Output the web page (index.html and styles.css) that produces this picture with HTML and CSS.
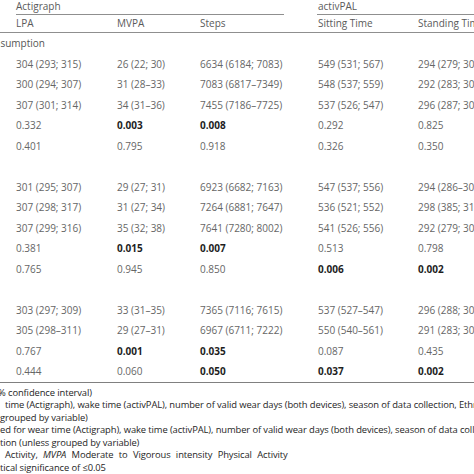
FILE: index.html
```html
<!DOCTYPE html>
<html lang="en">
<head>
<meta charset="utf-8">
<title>Table</title>
<link rel="stylesheet" href="styles.css">
</head>
<body>
<div class="sheet">
  <div class="row hdr1">
    <div class="grp grp-a">Actigraph</div>
    <div class="grp grp-b">activPAL</div>
  </div>
  <div class="row hdr2">
    <div class="c lbl"></div>
    <div class="c">LPA</div>
    <div class="c">MVPA</div>
    <div class="c">Steps</div>
    <div class="c">Sitting Time</div>
    <div class="c">Standing Time</div>
  </div>
  <div class="body">
    <div class="row"><div class="c section">Consumption</div></div>
    <div class="row"><div class="c lbl"></div><div class="c">304 (293; 315)</div><div class="c">26 (22; 30)</div><div class="c">6634 (6184; 7083)</div><div class="c">549 (531; 567)</div><div class="c">294 (279; 309)</div></div>
    <div class="row"><div class="c lbl"></div><div class="c">300 (294; 307)</div><div class="c">31 (28–33)</div><div class="c">7083 (6817–7349)</div><div class="c">548 (537; 559)</div><div class="c">292 (283; 301)</div></div>
    <div class="row"><div class="c lbl"></div><div class="c">307 (301; 314)</div><div class="c">34 (31–36)</div><div class="c">7455 (7186–7725)</div><div class="c">537 (526; 547)</div><div class="c">296 (287; 305)</div></div>
    <div class="row"><div class="c lbl"></div><div class="c">0.332</div><div class="c b">0.003</div><div class="c b">0.008</div><div class="c">0.292</div><div class="c">0.825</div></div>
    <div class="row"><div class="c lbl"></div><div class="c">0.401</div><div class="c">0.795</div><div class="c">0.918</div><div class="c">0.326</div><div class="c">0.350</div></div>
    <div class="row"><div class="c lbl"></div></div>
    <div class="row"><div class="c lbl"></div><div class="c">301 (295; 307)</div><div class="c">29 (27; 31)</div><div class="c">6923 (6682; 7163)</div><div class="c">547 (537; 556)</div><div class="c">294 (286–302)</div></div>
    <div class="row"><div class="c lbl"></div><div class="c">307 (298; 317)</div><div class="c">31 (27; 34)</div><div class="c">7264 (6881; 7647)</div><div class="c">536 (521; 552)</div><div class="c">298 (385; 311)</div></div>
    <div class="row"><div class="c lbl"></div><div class="c">307 (299; 316)</div><div class="c">35 (32; 38)</div><div class="c">7641 (7280; 8002)</div><div class="c">541 (526; 556)</div><div class="c">292 (279; 305)</div></div>
    <div class="row"><div class="c lbl"></div><div class="c">0.381</div><div class="c b">0.015</div><div class="c b">0.007</div><div class="c">0.513</div><div class="c">0.798</div></div>
    <div class="row"><div class="c lbl"></div><div class="c">0.765</div><div class="c">0.945</div><div class="c">0.850</div><div class="c b">0.006</div><div class="c b">0.002</div></div>
    <div class="row"><div class="c lbl"></div></div>
    <div class="row"><div class="c lbl"></div><div class="c">303 (297; 309)</div><div class="c">33 (31–35)</div><div class="c">7365 (7116; 7615)</div><div class="c">537 (527–547)</div><div class="c">296 (288; 304)</div></div>
    <div class="row"><div class="c lbl"></div><div class="c">305 (298–311)</div><div class="c">29 (27–31)</div><div class="c">6967 (6711; 7222)</div><div class="c">550 (540–561)</div><div class="c">291 (283; 300)</div></div>
    <div class="row"><div class="c lbl"></div><div class="c">0.767</div><div class="c b">0.001</div><div class="c b">0.035</div><div class="c">0.087</div><div class="c">0.435</div></div>
    <div class="row"><div class="c lbl"></div><div class="c">0.444</div><div class="c">0.060</div><div class="c b">0.050</div><div class="c b">0.037</div><div class="c b">0.002</div></div>
  </div>
</div>
<div class="notes">
  <p class="n-cut">% confidence interval)</p>
  <p class="n-in">time (Actigraph), wake time (activPAL), number of valid wear days (both devices), season of data collection, Ethnicity</p>
  <p>grouped by variable)</p>
  <p>ed for wear time (Actigraph), wake time (activPAL), number of valid wear days (both devices), season of data collection</p>
  <p>tion (unless grouped by variable)</p>
  <p class="n-in n-wide">Activity, <i>MVPA</i> Moderate to Vigorous intensity Physical Activity</p>
  <p>tical significance of ≤0.05</p>
</div>
</body>
</html>
```

FILE: styles.css
```css
html, body {
  margin: 0;
  padding: 0;
  background: #ffffff;
  overflow: hidden;
  width: 474px;
  height: 474px;
}

body {
  font-family: "Open Sans", "Noto Sans", sans-serif;
  font-size: 10px;
  color: #666666;
}

.sheet {
  width: 560px;
  margin-left: -18px;
}

.row {
  display: grid;
  grid-template-columns: 34px 101px 83px 118px 100px 124px;
  height: 20.5px;
  line-height: 20.5px;
  white-space: nowrap;
}

.c {
  overflow: visible;
}

.section {
  grid-column: 1 / -1;
  color: #555555;
}

.b {
  font-weight: 700;
  color: #1e1e1e;
}

.hdr1 {
  height: 14px;
  line-height: 12px;
  color: #5a5a5a;
}

.grp {
  border-bottom: 1px solid #8f8f8f;
  height: 14px;
}

.grp-a {
  grid-column: 2 / 5;
  margin-right: 34px;
}

.grp-b {
  grid-column: 5 / 7;
  margin-left: -1px;
  padding-left: 1px;
}

.hdr2 {
  height: 18px;
  line-height: 18px;
  border-bottom: 1px solid #8f8f8f;
  color: #5a5a5a;
}

.body {
  border-bottom: 1px solid #808080;
}

.notes {
  padding-top: 4px;
  color: #262626;
  white-space: nowrap;
  font-size: 9.4px;
  letter-spacing: -0.1px;
}

.notes p {
  margin: 0;
  height: 12.6px;
  line-height: 12.6px;
}

.n-cut {
  margin-left: -2px !important;
}

.n-in {
  padding-left: 5px;
}

.n-wide {
  word-spacing: 3px;
}
```
